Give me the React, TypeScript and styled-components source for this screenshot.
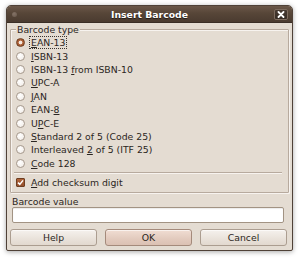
import React from "react";
import styled, { createGlobalStyle } from "styled-components";

const Global = createGlobalStyle`
  html, body { margin: 0; padding: 0; background: #ffffff; }
  body { font-family: "DejaVu Sans", "Liberation Sans", sans-serif; }
  * { box-sizing: border-box; }
`;

const Stage = styled.div`
  width: 300px;
  height: 258px;
  padding: 5px 7px 7px 6px;
  background: #ffffff;
`;

const Window = styled.div`
  width: 287px;
  height: 246px;
  border: 1px solid #4f4137;
  border-radius: 5px 5px 2px 2px;
  box-shadow: 0 1px 5px rgba(0, 0, 0, 0.35);
  display: flex;
  flex-direction: column;
  overflow: hidden;
  background: #e4dcd2;
  font-size: 9.3px;
  line-height: 11px;
  color: #2b2622;
`;

const TitleBar = styled.div`
  height: 17px;
  flex: none;
  display: grid;
  grid-template-columns: 20px 1fr 20px;
  align-items: center;
  background: linear-gradient(to bottom, #6b5849 0%, #574638 45%, #4a3b30 100%);
  border-bottom: 1px solid #3a2e26;
`;

const MenuDot = styled.span`
  justify-self: start;
  margin-left: 5px;
  width: 5px;
  height: 5px;
  border-radius: 50%;
  background: radial-gradient(circle at 40% 35%, #8f7e72, #6a5a4e);
  opacity: 0.8;
`;

const Title = styled.div`
  text-align: center;
  color: #ffffff;
  font-weight: bold;
  font-size: 9.3px;
  text-shadow: 0 1px 1px rgba(0, 0, 0, 0.6);
`;

const CloseButton = styled.span`
  justify-self: end;
  margin-right: 4px;
  width: 14px;
  height: 11px;
  border-radius: 2px;
  background: linear-gradient(#473a31, #352b24);
  border: 1px solid #7d6b5e;
  display: flex;
  align-items: center;
  justify-content: center;
`;

const Body = styled.div`
  flex: 1;
  display: flex;
  flex-direction: column;
  padding: 6px 3px 4px 3px;
`;

const Group = styled.div`
  position: relative;
  border: 1px solid #b7aa9e;
  box-shadow: inset 1px 1px 0 #f7f3ef, 1px 1px 0 #f7f3ef;
  border-radius: 1px;
  padding: 6px 5px 2.5px 5px;
  display: flex;
  flex-direction: column;
`;

const Legend = styled.span`
  position: absolute;
  top: -6px;
  left: 5px;
  padding: 0 1px;
  background: #e4dcd2;
`;

const Row = styled.label`
  height: 13.4px;
  display: flex;
  align-items: center;
  gap: 6px;
`;

const Radio = styled.span<{ $on?: boolean }>`
  flex: none;
  width: 9px;
  height: 9px;
  border-radius: 50%;
  border: 1px solid ${(p) => (p.$on ? "#6e3e22" : "#a5988c")};
  background: ${(p) =>
    p.$on
      ? "radial-gradient(circle, #f4e6dc 0 1.6px, #b0643a 2.2px, #99522c 100%)"
      : "radial-gradient(circle at 40% 35%, #ffffff, #efe9e3)"};
`;

const Check = styled.span`
  flex: none;
  width: 9px;
  height: 9px;
  border-radius: 1px;
  border: 1px solid #6e3e22;
  background: linear-gradient(#b0643a, #94502c);
  display: flex;
  align-items: center;
  justify-content: center;
`;

const Text = styled.span<{ $focus?: boolean }>`
  padding: 0 1px;
  margin-left: -1px;
  outline: ${(p) => (p.$focus ? "1px dotted #3a3430" : "none")};
  outline-offset: 0;
`;

const U = styled.span`
  text-decoration: underline;
  text-underline-offset: 1px;
`;

const Separator = styled.div`
  height: 2px;
  margin: 2px 1px 2px -2px;
  border-top: 1px solid #b7aa9e;
  border-bottom: 1px solid #f7f3ef;
`;

const FieldLabel = styled.div`
  margin: 3.5px 0 0 2px;
`;

const Input = styled.input`
  display: block;
  height: 16px;
  margin: 0 5px 0 2px;
  border: 1px solid #a29383;
  border-radius: 2px;
  background: #ffffff;
  box-shadow: inset 0 1px 1px rgba(0, 0, 0, 0.08);
  font: inherit;
  padding: 0 3px;
  outline: none;
`;

const ButtonRow = styled.div`
  margin: 5.5px 2px 0 0;
  display: grid;
  grid-template-columns: repeat(3, 1fr);
  gap: 8px;
`;

const Button = styled.button<{ $default?: boolean }>`
  height: 17px;
  border-radius: 3px;
  border: 1px solid ${(p) => (p.$default ? "#a48a7b" : "#ab9d90")};
  background: ${(p) =>
    p.$default
      ? "linear-gradient(#f0ddd3, #e2cabd 60%, #dbc1b3)"
      : "linear-gradient(#f5f1ed, #e9e2da 60%, #e2d9cf)"};
  box-shadow: inset 0 1px 0 rgba(255, 255, 255, 0.6);
  font: inherit;
  color: #2b2622;
  padding: 0;
`;

const Cross = () => (
  <svg width="8" height="7" viewBox="0 0 8 7">
    <path d="M1.5 1 L6.5 6 M6.5 1 L1.5 6" stroke="#ffffff" strokeWidth="1.8" strokeLinecap="round" />
  </svg>
);

const Tick = () => (
  <svg width="7" height="7" viewBox="0 0 7 7">
    <path d="M1 3.6 L2.8 5.4 L6 1.4" fill="none" stroke="#ffffff" strokeWidth="1.5" />
  </svg>
);

type Option = { pre: string; key: string; post: string };

const options: Option[] = [
  { pre: "", key: "E", post: "AN-13" },
  { pre: "", key: "I", post: "SBN-13" },
  { pre: "ISBN-13 ", key: "f", post: "rom ISBN-10" },
  { pre: "", key: "U", post: "PC-A" },
  { pre: "", key: "J", post: "AN" },
  { pre: "EAN-", key: "8", post: "" },
  { pre: "U", key: "P", post: "C-E" },
  { pre: "", key: "S", post: "tandard 2 of 5 (Code 25)" },
  { pre: "Interleaved ", key: "2", post: " of 5 (ITF 25)" },
  { pre: "", key: "C", post: "ode 128" },
];

export default function App() {
  return (
    <Stage>
      <Global />
      <Window>
        <TitleBar>
          <MenuDot />
          <Title>Insert Barcode</Title>
          <CloseButton>
            <Cross />
          </CloseButton>
        </TitleBar>
        <Body>
          <Group>
            <Legend>Barcode type</Legend>
            {options.map((o, i) => (
              <Row key={i}>
                <Radio $on={i === 0} />
                <Text $focus={i === 0}>
                  {o.pre}
                  <U>{o.key}</U>
                  {o.post}
                </Text>
              </Row>
            ))}
            <Separator />
            <Row>
              <Check>
                <Tick />
              </Check>
              <Text>
                <U>A</U>dd checksum digit
              </Text>
            </Row>
          </Group>
          <FieldLabel>Barcode value</FieldLabel>
          <Input type="text" />
          <ButtonRow>
            <Button>Help</Button>
            <Button $default>OK</Button>
            <Button>Cancel</Button>
          </ButtonRow>
        </Body>
      </Window>
    </Stage>
  );
}
